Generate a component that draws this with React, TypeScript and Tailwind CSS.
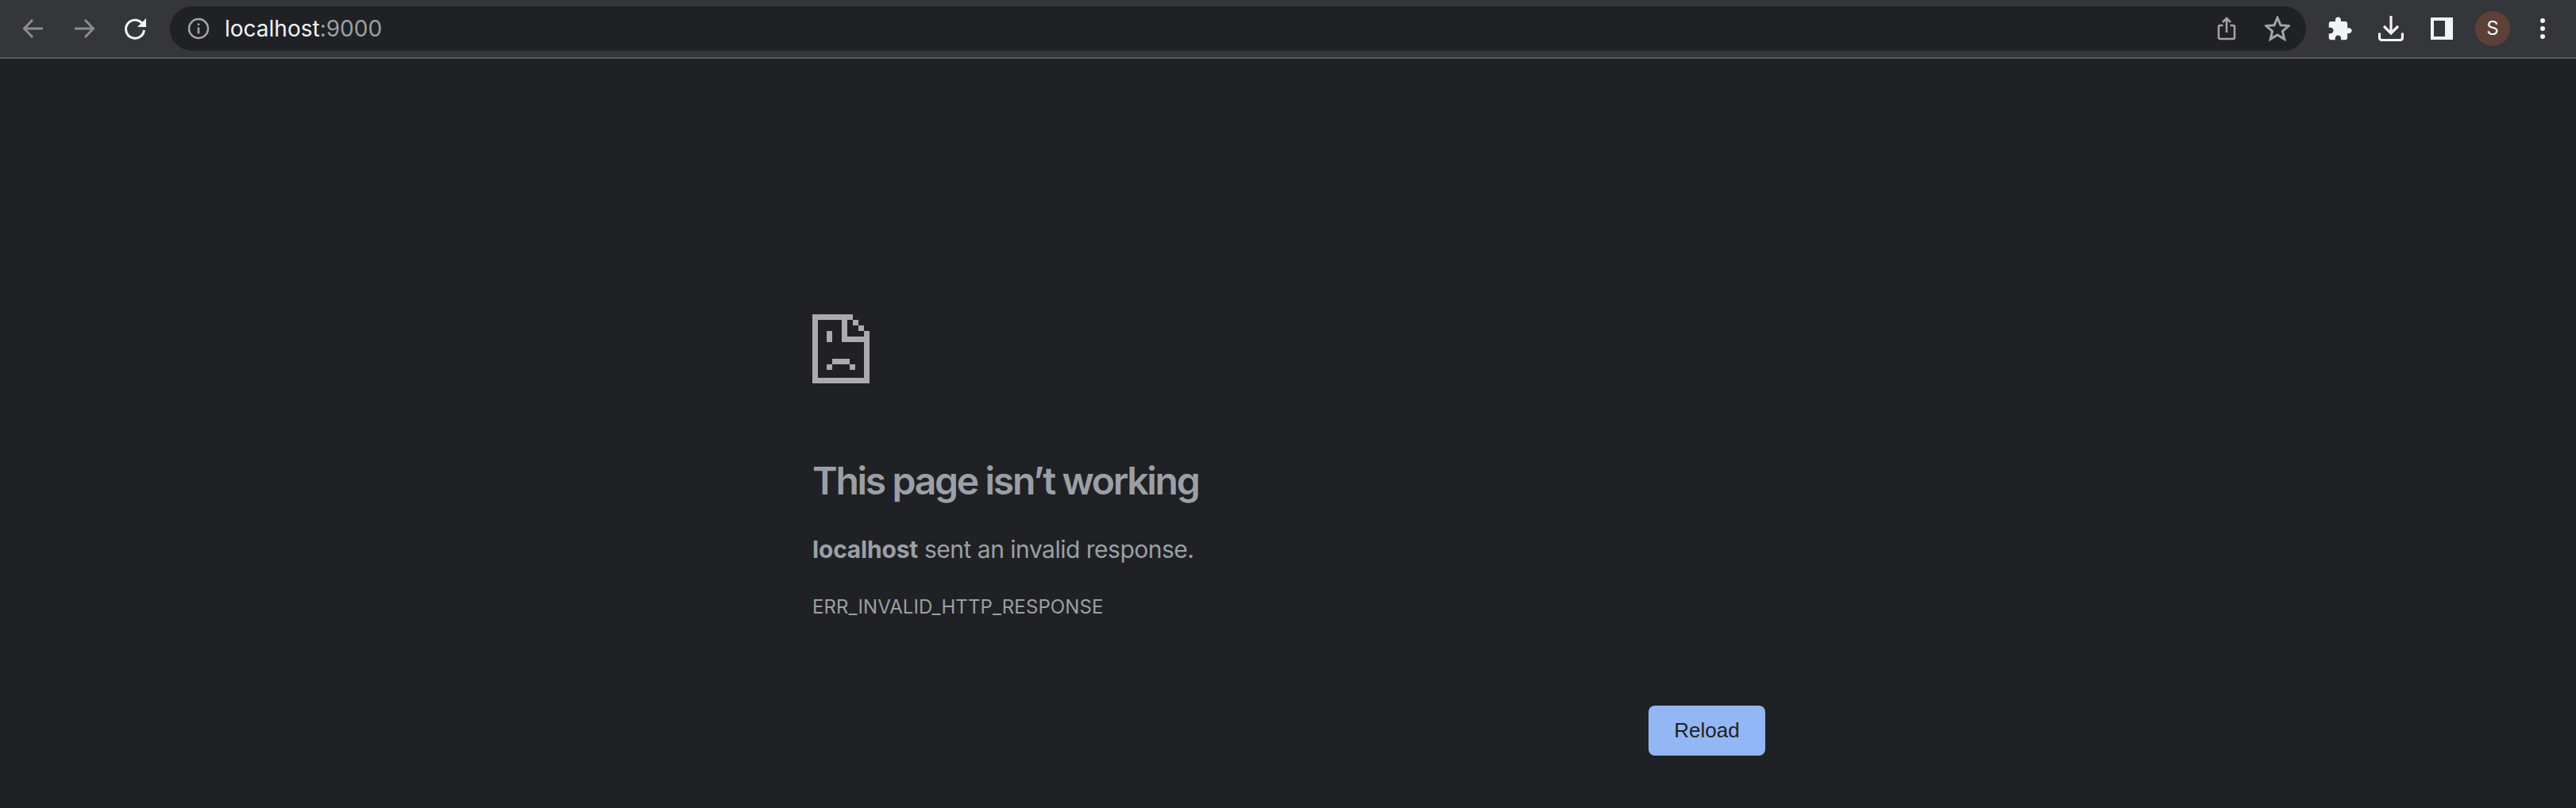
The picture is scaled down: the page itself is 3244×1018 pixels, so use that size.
export default function App() {
  return (
    <div className="h-screen overflow-hidden bg-[#202124] font-['Inter',sans-serif]">
      <header className="flex h-[74px] items-center border-b-2 border-[#5a5b5f] bg-[#35363a]">
        <svg className="ml-[26px] h-[32px] w-[32px]" viewBox="0 0 32 32" fill="none" stroke="#8b8c8f" strokeWidth="3">
          <path d="M28 16H5M15 5 4.500 16 15 27" />
        </svg>
        <svg className="ml-[32px] h-[32px] w-[32px]" viewBox="0 0 32 32" fill="none" stroke="#8b8c8f" strokeWidth="3">
          <path d="M4 16h23M17 5l10.500 11L17 27" />
        </svg>
        <svg className="ml-[32px] h-[32px] w-[32px]" viewBox="0 0 32 32" fill="none">
          <path d="M25 9.500A11.500 11.500 0 1 0 27.500 18" stroke="#f1f3f4" strokeWidth="3" />
          <path d="M30 3v11H19z" fill="#f1f3f4" />
        </svg>
        <div className="ml-[28px] flex h-[56px] w-[2690px] items-center rounded-full bg-[#202124]">
          <svg className="ml-[22px] h-[28px] w-[28px]" viewBox="0 0 28 28" fill="none">
            <circle cx="14" cy="14" r="12" stroke="#a3a5a8" strokeWidth="2.500" />
            <path d="M12.700 12.500h2.600v8h-2.600zM12.700 7.500h2.600v2.600h-2.600z" fill="#a3a5a8" />
          </svg>
          <span className="ml-[19px] text-[28px] leading-none text-[#f1f3f4]">
            localhost<span className="text-[#9aa0a6]">:9000</span>
          </span>
          <svg className="ml-auto h-[32px] w-[26px]" viewBox="0 0 26 32" fill="none" stroke="#a3a5a8" strokeWidth="2.500">
            <path d="M8.500 12H5a2 2 0 0 0-2 2v13a2 2 0 0 0 2 2h16a2 2 0 0 0 2-2V14a2 2 0 0 0-2-2h-3.500M13 21V3M8 8l5-5 5 5" />
          </svg>
          <svg className="ml-[35px] mr-[20px] h-[32px] w-[32px]" viewBox="2 2 28 28" fill="none" stroke="#a3a5a8" strokeWidth="2.600">
            <path d="m16 4 3.500 8.300 9 .7-6.900 5.900 2.100 8.800L16 23l-7.700 4.700 2.100-8.800L3.500 13l9-.7z" />
          </svg>
        </div>
        <svg className="ml-[26px] h-[33px] w-[33px]" viewBox="0 0 24 24" fill="#f1f3f4">
          <path d="M20.500 11H19V7c0-1.100-.9-2-2-2h-4V3.500C13 2.120 11.880 1 10.500 1S8 2.120 8 3.500V5H4c-1.100 0-1.990.9-1.990 2v3.800H3.500c1.490 0 2.700 1.210 2.700 2.700s-1.210 2.700-2.700 2.700H2V20c0 1.100.9 2 2 2h3.800v-1.500c0-1.490 1.210-2.700 2.700-2.700 1.490 0 2.700 1.210 2.700 2.700V22H17c1.100 0 2-.9 2-2v-4h1.500c1.380 0 2.500-1.120 2.500-2.500S21.880 11 20.500 11z" />
        </svg>
        <svg className="ml-[32px] h-[32px] w-[32px]" viewBox="0 0 32 32" fill="none" stroke="#f1f3f4" strokeWidth="3.200">
          <path d="M16 0v22M7 13l9 9 9-9M1.500 21.500v6a3 3 0 0 0 3 3h23a3 3 0 0 0 3-3v-6" />
        </svg>
        <svg className="ml-[34px] h-[28px] w-[28px]" viewBox="0 0 28 28">
          <path d="M0 0h28v28H0zM4 4v20h14V4z" fill="#f1f3f4" fillRule="evenodd" />
        </svg>
        <div className="ml-[28px] flex h-[44px] w-[44px] items-center justify-center rounded-full bg-[#5d4037] text-[24px] leading-none text-[#f1f3f4]">
          S
        </div>
        <svg className="ml-[37px] h-[28px] w-[8px]" viewBox="0 0 8 28" fill="#f1f3f4">
          <circle cx="4" cy="4" r="3" />
          <circle cx="4" cy="14" r="3" />
          <circle cx="4" cy="24" r="3" />
        </svg>
      </header>
      <main className="ml-[1023px] w-[1200px] pt-[322px]">
        <svg className="block h-[87px] w-[72px]" viewBox="0 0 72 87" fill="#ababab" shapeRendering="crispEdges">
          <path d="M0 0h51v7H44v21h28v59H0zM7 7v73h58V35H37V7z" fillRule="evenodd" />
          <path d="M51 7h7v7h-7zM58 14h7v7h-7zM65 21h7v14h-7zM18 21h7v14h-7zM25 56h22v7H25zM18 63h7v7h-7zM47 63h7v7h-7z" />
        </svg>
        <h1 className="mt-[93px] text-[48px] leading-[60px] font-semibold tracking-[-2.3px] text-[#9aa0a6]">This page isn’t working</h1>
        <p className="mt-[34px] text-[30px] leading-[44px] tracking-[-0.5px] text-[#9aa0a6]">
          <strong className="font-bold tracking-[-0.2px]">localhost</strong> sent an invalid response.
        </p>
        <p className="mt-[36px] text-[24px] leading-[30px] tracking-[0.1px] text-[#9aa0a6]">ERR_INVALID_HTTP_RESPONSE</p>
        <div className="mt-[109px] flex justify-end">
          <button className="h-[63px] w-[147px] rounded-[8px] bg-[#93b6f4] font-['Liberation_Sans',sans-serif] text-[26px] text-[#202124]">
            Reload
          </button>
        </div>
      </main>
    </div>
  );
}
